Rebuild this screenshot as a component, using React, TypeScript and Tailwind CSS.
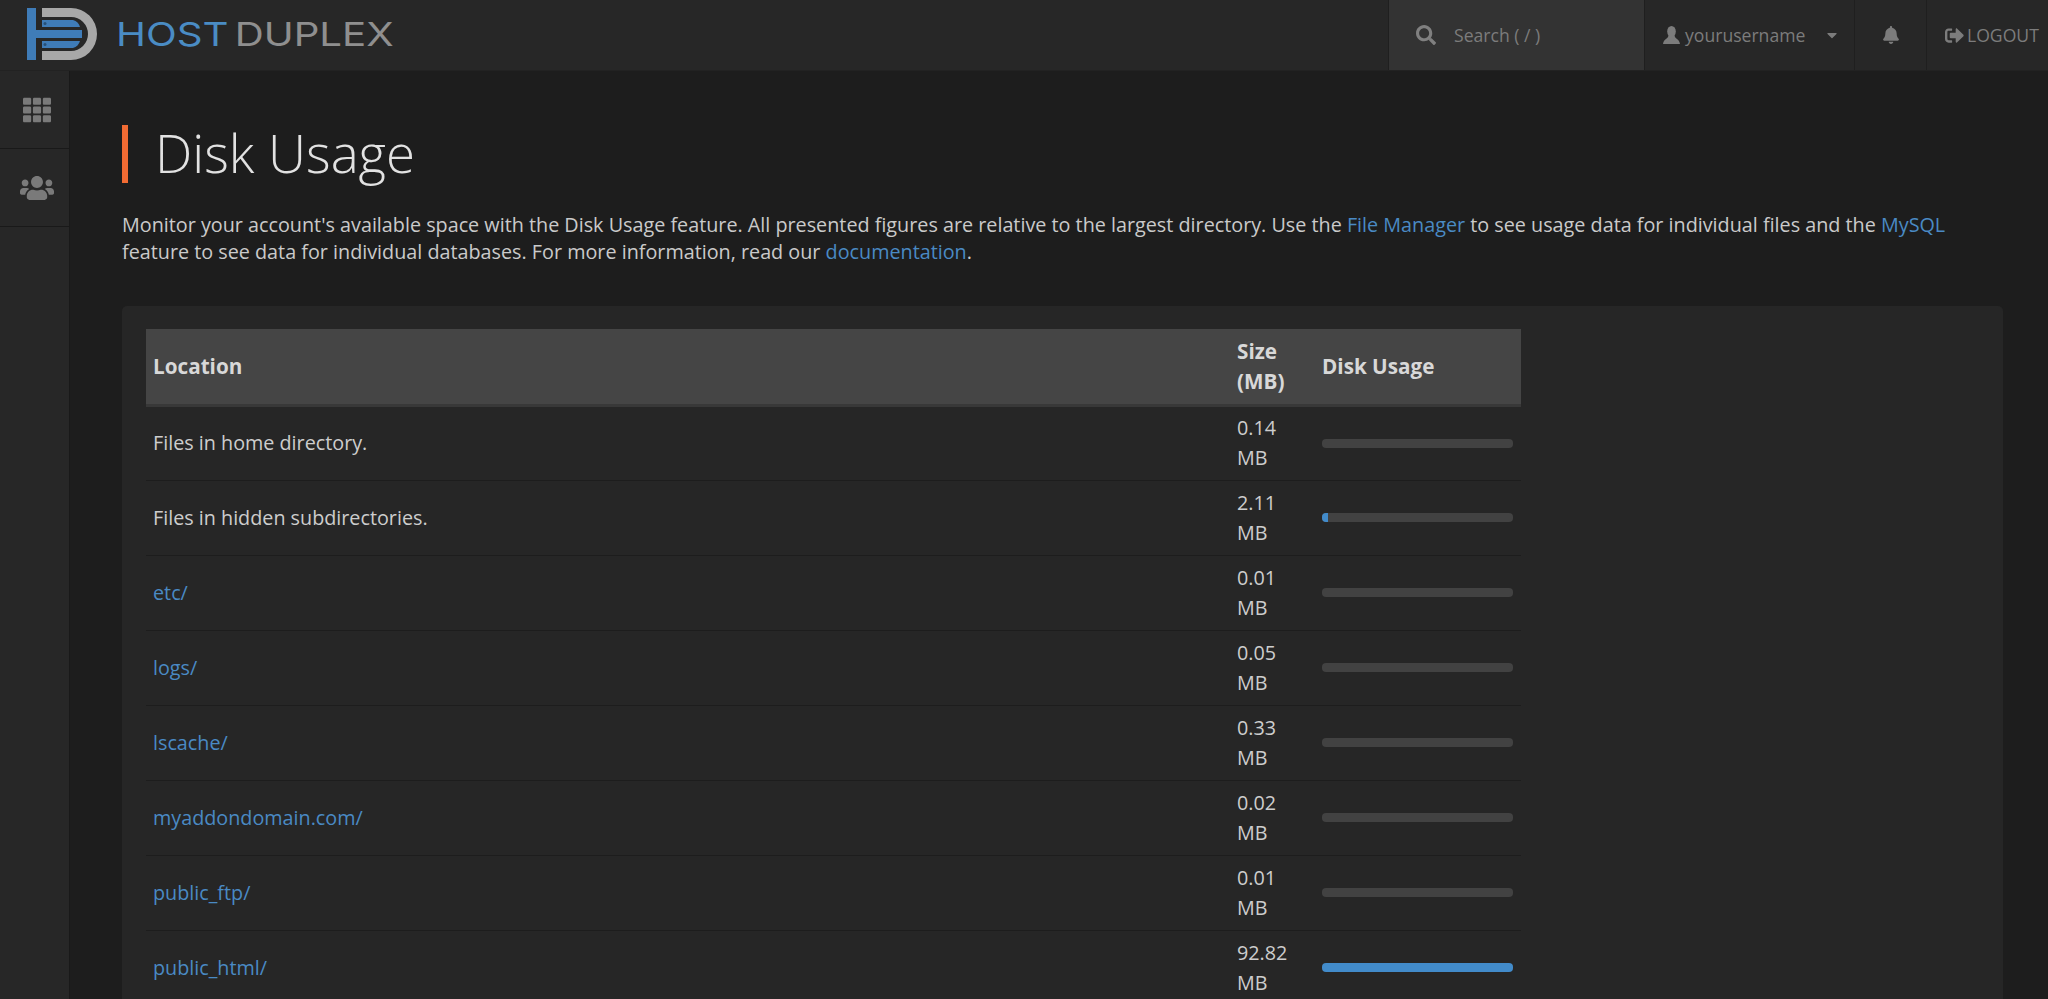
import { FaBell, FaCaretDown, FaSearch, FaSignOutAlt, FaTh, FaUsers } from "react-icons/fa";

const rows = [
  { location: "Files in home directory.", size: "0.14 MB", usage: 0, link: false },
  { location: "Files in hidden subdirectories.", size: "2.11 MB", usage: 3, link: false },
  { location: "etc/", size: "0.01 MB", usage: 0, link: true },
  { location: "logs/", size: "0.05 MB", usage: 0, link: true },
  { location: "lscache/", size: "0.33 MB", usage: 0, link: true },
  { location: "myaddondomain.com/", size: "0.02 MB", usage: 0, link: true },
  { location: "public_ftp/", size: "0.01 MB", usage: 0, link: true },
  { location: "public_html/", size: "92.82 MB", usage: 100, link: true },
];

function Logo() {
  return (
    <svg width="70" height="52" viewBox="0 0 70 52" className="shrink-0">
      <rect x="0" y="0" width="9" height="52" fill="#3f7cb8" />
      <path d="M15 0h29a26 26 0 0 1 0 52H15v-9h29a17 17 0 0 0 0-34H15z" fill="#a8a8a8" />
      <rect x="9" y="22" width="46" height="8" fill="#3f7cb8" />
      <path d="M15 12h31a10 10 0 0 1 7 7H15z" fill="#3f7cb8" />
      <path d="M15 33h38a10 10 0 0 1-7 7H15z" fill="#3f7cb8" />
      <circle cx="18" cy="15.5" r="1.5" fill="#274f78" />
      <circle cx="18" cy="36.5" r="1.5" fill="#274f78" />
    </svg>
  );
}

function UserIcon() {
  return (
    <svg width="17" height="18" viewBox="0 0 17 18" fill="currentColor" className="shrink-0">
      <ellipse cx="8.5" cy="5.5" rx="4.3" ry="5.5" />
      <path d="M5.4 9.5C5.4 12.8.8 12.6 0 18h17c-.8-5.4-5.4-5.2-5.4-8.5z" />
    </svg>
  );
}

export default function App() {
  return (
    <div className="h-screen overflow-hidden bg-[#1d1d1d] font-['Open_Sans',sans-serif] text-[#cdcdcd]">
      {/* Top bar */}
      <header className="flex h-[71px] items-center border-b border-[#222222] bg-[#272727]">
        <div className="flex items-center pb-[2px] pl-[27px]">
          <Logo />
          <div className="ml-[19px] flex w-[277px] origin-left scale-x-[1.22] gap-[5px] whitespace-nowrap font-['Inter',sans-serif] text-[33px] font-normal leading-none">
            <span className="text-[#4a8cc4]">HOST</span>
            <span className="text-[#8f8f8f]">DUPLEX</span>
          </div>
        </div>
        <div className="ml-auto flex h-full items-stretch text-[17.6px] text-[#7c7c7c]">
          <div className="flex w-[256px] items-center border-l border-[#1f1f1f] bg-[#333333] pl-[27px]">
            <FaSearch className="text-[20px] text-[#808080]" />
            <span className="ml-[18px]">Search ( / )</span>
          </div>
          <div className="flex w-[210px] items-center border-l border-[#1f1f1f] pl-[18px]">
            <UserIcon />
            <span className="ml-[5px]">yourusername</span>
            <FaCaretDown className="ml-[19px] text-[16px]" />
          </div>
          <div className="flex w-[72px] items-center justify-center border-l border-[#1f1f1f]">
            <FaBell className="text-[18px]" />
          </div>
          <div className="flex w-[122px] items-center border-l border-[#1f1f1f] pl-[18px]">
            <FaSignOutAlt className="text-[19px]" />
            <span className="ml-[3px]">LOGOUT</span>
          </div>
        </div>
      </header>

      <div className="flex">
        {/* Sidebar */}
        <aside className="h-[928px] w-[70px] shrink-0 border-r border-[#191919] bg-[#272727]">
          <div className="flex h-[78px] items-center justify-center border-b border-[#191919] pl-[4px] text-[#7a7a7a]">
            <FaTh className="text-[28px]" />
          </div>
          <div className="flex h-[78px] items-center justify-center border-b border-[#191919] pl-[4px] text-[#7a7a7a]">
            <FaUsers className="text-[34px]" />
          </div>
        </aside>

        {/* Main content */}
        <main className="min-w-0 flex-1 pl-[52px] pr-[45px]">
          <div className="mt-[54px] flex h-[58px] items-center border-l-[6px] border-[#f26b33] pb-[2px] pl-[27px]">
            <h1 className="text-[52.8px] font-light leading-none text-[#e2e2e2]">Disk Usage</h1>
          </div>
          <p className="mt-[28px] pr-[40px] text-[19.77px] leading-[27px] text-[#cacaca]">
            Monitor your account's available space with the Disk Usage feature. All presented figures are relative to the largest directory. Use the{" "}
            <a className="text-[#4a8ac4]">File Manager</a> to see usage data for individual files and the{" "}
            <a className="text-[#4a8ac4]">MySQL</a> feature to see data for individual databases. For more information, read our{" "}
            <a className="text-[#4a8ac4]">documentation</a>.
          </p>

          <section className="mt-[41px] rounded-[5px] bg-[#262626] pl-[24px] pt-[23px]">
            <table className="w-[1375px] table-fixed border-collapse text-[19.75px] leading-[30px]">
              <thead>
                <tr className="h-[76px] border-b-[3px] border-[#383838] bg-[#454545] text-left text-[20.7px] text-[#d8d8d8]">
                  <th className="px-[7px] font-bold">Location</th>
                  <th className="w-[85px] px-[7px] font-bold">Size (MB)</th>
                  <th className="w-[206px] px-[7px] font-bold">Disk Usage</th>
                </tr>
              </thead>
              <tbody>
                {rows.map((row) => (
                  <tr key={row.location} className="h-[75px] border-b border-[#1d1d1d]">
                    <td className={`px-[7px] ${row.link ? "text-[#4a8ac4]" : ""}`}>{row.location}</td>
                    <td className="px-[7px]">{row.size}</td>
                    <td className="px-[7px]">
                      <div className="h-[9px] w-[191px] overflow-hidden rounded-[4px] bg-[#424242]">
                        <div className="h-full bg-[#428bca]" style={{ width: `${row.usage}%` }} />
                      </div>
                    </td>
                  </tr>
                ))}
              </tbody>
            </table>
          </section>
        </main>
      </div>
    </div>
  );
}
